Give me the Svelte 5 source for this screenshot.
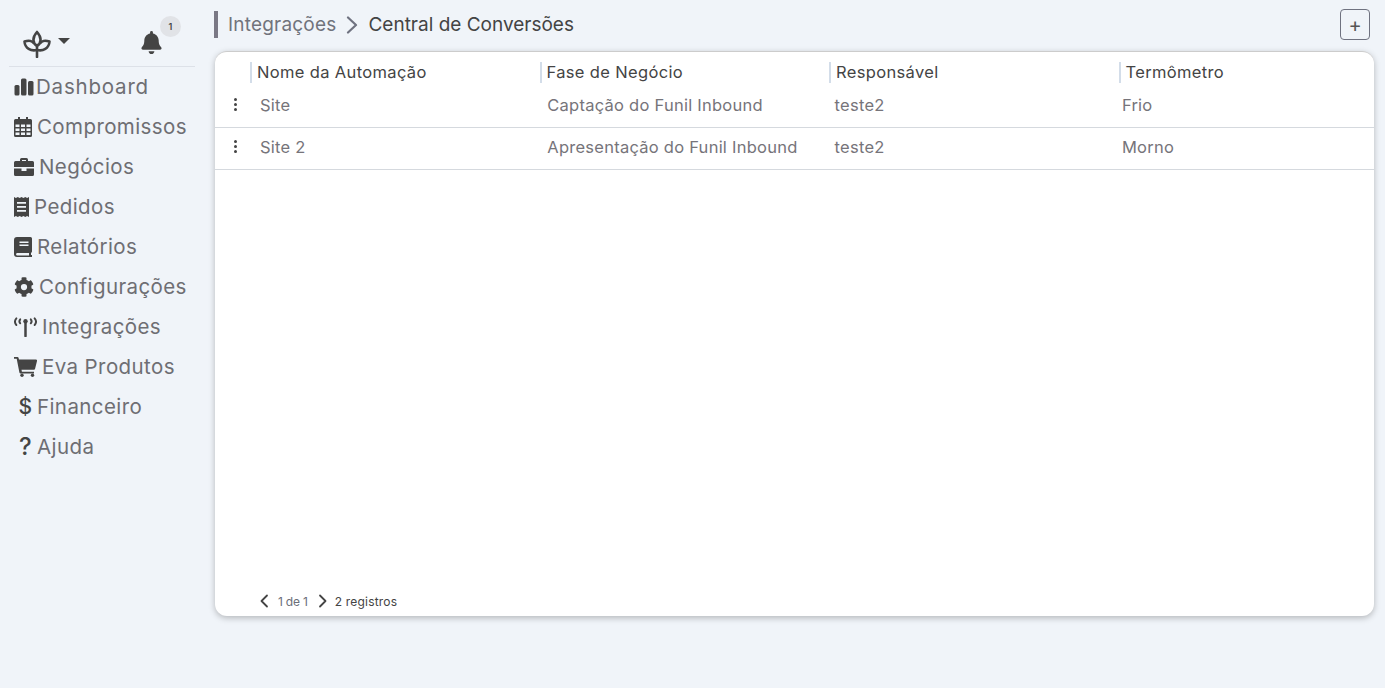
<script lang="ts">
	const menu = [
		{ label: 'Dashboard', icon: 'chart', w: 20, gap: 2 },
		{ label: 'Compromissos', icon: 'calendar', w: 18, gap: 5 },
		{ label: 'Negócios', icon: 'briefcase', w: 20, gap: 5 },
		{ label: 'Pedidos', icon: 'receipt', w: 15, gap: 5 },
		{ label: 'Relatórios', icon: 'book', w: 18, gap: 5 },
		{ label: 'Configurações', icon: 'cog', w: 20, gap: 5 },
		{ label: 'Integrações', icon: 'antenna', w: 23, gap: 5 },
		{ label: 'Eva Produtos', icon: 'cart', w: 23, gap: 5 },
		{ label: 'Financeiro', icon: 'dollar', w: 18, gap: 5 },
		{ label: 'Ajuda', icon: 'question', w: 18, gap: 5 }
	];

	const columns = ['Nome da Automação', 'Fase de Negócio', 'Responsável', 'Termômetro'];

	const rows = [
		['Site', 'Captação do Funil Inbound', 'teste2', 'Frio'],
		['Site 2', 'Apresentação do Funil Inbound', 'teste2', 'Morno']
	];
</script>

<div class="page">
	<aside class="sidebar">
		<div class="top">
			<div class="brand">
				<svg class="logo" viewBox="0 0 28 28" fill="none" stroke="#444" stroke-width="2.600" stroke-linecap="round" stroke-linejoin="round">
					<path d="M14 27V15" />
					<path d="M14 16C9.500 13 9 7.500 14 2C19 7.500 18.500 13 14 16Z" />
					<path d="M14 20C8 21.500 2 18.500 1.500 11.500C6 10 9.500 11 10.500 13" />
					<path d="M14 20C20 21.500 26 18.500 26.500 11.500C22 10 18.500 11 17.500 13" />
				</svg>
				<span class="caret"></span>
			</div>
			<div class="bell">
				<svg viewBox="0 0 448 512" fill="#444">
					<path d="M224 512c35 0 64-29 64-64H160c0 35 29 64 64 64zm215-150c-19-21-55-52-55-154 0-78-54-140-128-155V32a32 32 0 1 0-64 0v21C118 68 64 130 64 208c0 102-36 133-55 154-6 6-9 14-9 22 0 16 13 32 32 32h384c19 0 32-16 32-32 0-8-3-16-9-22z" />
				</svg>
				<span class="badge">1</span>
			</div>
		</div>

		<nav class="menu">
			{#each menu as item}
				<div class="menu-item" style="gap: {item.gap}px">
					<span class="icon" style="width: {item.w}px">
						{#if item.icon === 'chart'}
							<svg viewBox="0 0 20 20" fill="#444"><rect x="0.500" y="8" width="5" height="10.500" rx="1.500" /><rect x="7" y="1.500" width="5.500" height="17" rx="1.500" /><rect x="14" y="4" width="5.500" height="14.500" rx="1.500" /></svg>
						{:else if item.icon === 'calendar'}
							<svg viewBox="0 0 18 20" fill="#444"><path fill-rule="evenodd" d="M4 0h2v2h6V0h2v2h2.500A1.500 1.500 0 0 1 18 3.500v15a1.500 1.500 0 0 1-1.500 1.500h-15A1.500 1.500 0 0 1 0 18.500v-15A1.500 1.500 0 0 1 1.500 2H4zM1.500 7.500v2.500h4V7.500zm5.500 0v2.500h4V7.500zm5.500 0v2.500h4V7.500zm-11 4v2.500h4v-2.500zm5.500 0v2.500h4v-2.500zm5.500 0v2.500h4v-2.500zm-11 4V18h4v-2.500zm5.500 0V18h4v-2.500zm5.500 0V18h4v-2.500z" /></svg>
						{:else if item.icon === 'briefcase'}
							<svg viewBox="0 0 20 18" fill="#444"><path fill-rule="evenodd" d="M6 3V1.500A1.500 1.500 0 0 1 7.500 0h5A1.500 1.500 0 0 1 14 1.500V3h4.500A1.500 1.500 0 0 1 20 4.500V9H0V4.500A1.500 1.500 0 0 1 1.500 3zm2-1v1h4V2z" /><path d="M0 10.500h7.500V13h5v-2.500H20v6a1.500 1.500 0 0 1-1.500 1.500h-17A1.500 1.500 0 0 1 0 16.500z" /></svg>
						{:else if item.icon === 'receipt'}
							<svg viewBox="0 0 15 20" fill="#444"><path fill-rule="evenodd" d="M0 0l1.900 1L3.800 0l1.900 1L7.500 0l1.900 1 1.900-1 1.800 1L15 0v20l-1.900-1-1.800 1-1.900-1-1.900 1-1.800-1-1.900 1-1.900-1L0 20zM3 5v1.800h9V5zm0 4v1.800h9V9zm0 4v1.800h9V13z" /></svg>
						{:else if item.icon === 'book'}
							<svg viewBox="0 0 18 20" fill="#444"><path fill-rule="evenodd" d="M3 0h13.500A1.500 1.500 0 0 1 18 1.500v13a1.500 1.500 0 0 1-1 1.400v2.100h.5a1 1 0 0 1 0 2H3a3 3 0 0 1-3-3V3a3 3 0 0 1 3-3zm2.500 4.500v1.500h9V4.500zm0 3v1.500h9V7.500zM3 16a1.300 1.300 0 0 0 0 2.500h12V16z" /></svg>
						{:else if item.icon === 'cog'}
							<svg viewBox="0 0 512 512" fill="#444"><path d="M487 316l-42-25a190 190 0 0 0 0-70l42-25c5-3 7-8 6-14-11-35-30-67-55-94-4-4-10-5-15-2l-42 25a188 188 0 0 0-61-35V27c0-6-4-11-9-12-37-8-74-8-109 0-5 1-9 6-9 12v49a194 194 0 0 0-61 35L90 86c-5-3-11-2-15 2-25 27-44 59-55 94-2 6 1 11 6 14l42 25a190 190 0 0 0 0 70l-42 25c-5 3-7 8-6 14 11 35 30 67 55 94 4 4 10 5 15 2l42-25a188 188 0 0 0 61 35v49c0 6 4 11 9 12 37 8 74 8 109 0 5-1 9-6 9-12v-49a194 194 0 0 0 61-35l42 25c5 3 11 2 15-2 25-27 44-59 55-94 2-6-1-11-6-14zM256 336a80 80 0 1 1 0-160 80 80 0 0 1 0 160z" /></svg>
						{:else if item.icon === 'antenna'}
							<svg viewBox="0 0 24 20" fill="none" stroke="#444" stroke-width="2" stroke-linecap="round"><path d="M2.500 1C.800 3 .800 6 2.500 8" /><path d="M6.500 2C5.500 3.200 5.500 5 6.500 6.200" /><path d="M17.500 2C18.500 3.200 18.500 5 17.500 6.200" /><path d="M21.500 1C23.200 3 23.200 6 21.500 8" /><path d="M12 5V19.500" stroke-width="2.600" /><circle cx="12" cy="4" r="2.300" fill="#444" stroke="none" /></svg>
						{:else if item.icon === 'cart'}
							<svg viewBox="0 0 23 20" fill="#444"><path d="M0 0h3.500c.6 0 1 .4 1.100.9L5 2.500h17c.7 0 1.200.7 1 1.400l-2 8c-.1.500-.6.800-1 .8H7.500l.4 2H20v1.800H6.500c-.5 0-1-.4-1.100-.9L2.700 1.800H0z" /><circle cx="8" cy="18.300" r="1.700" /><circle cx="18.500" cy="18.300" r="1.700" /></svg>
						{:else if item.icon === 'dollar'}
							<span class="glyph dollar">$</span>
						{:else}
							<span class="glyph">?</span>
						{/if}
					</span>
					<span class="label">{item.label}</span>
				</div>
			{/each}
		</nav>
	</aside>

	<main class="content">
		<header class="breadcrumb">
			<div class="trail">
				<span class="parent">Integrações</span>
				<svg class="chevron" viewBox="0 0 12 18" fill="none" stroke="#6f7280" stroke-width="2.200" stroke-linecap="round" stroke-linejoin="round"><path d="M2 1.500L10 9L2 16.500" /></svg>
				<span class="current">Central de Conversões</span>
			</div>
			<button class="add" type="button">+</button>
		</header>

		<section class="card">
			<div class="head">
				{#each columns as col}
					<div class="head-cell">{col}</div>
				{/each}
			</div>

			<div class="body">
				{#each rows as row}
					<div class="row">
						<span class="dots"><i></i><i></i><i></i></span>
						{#each row as cell}
							<span class="cell">{cell}</span>
						{/each}
					</div>
				{/each}
			</div>

			<footer class="pager">
				<svg viewBox="0 0 10 14" fill="none" stroke="#444" stroke-width="1.800" stroke-linecap="round" stroke-linejoin="round"><path d="M8 1.500L2.500 7L8 12.500" /></svg>
				<span class="pages">1 de 1</span>
				<svg viewBox="0 0 10 14" fill="none" stroke="#444" stroke-width="1.800" stroke-linecap="round" stroke-linejoin="round"><path d="M2 1.500L7.500 7L2 12.500" /></svg>
				<span class="total">2 registros</span>
			</footer>
		</section>
	</main>
</div>

<style>
	:global(body) {
		margin: 0;
		background: #f0f4f9;
		font-family: 'Inter', 'Noto Sans', sans-serif;
	}

	.page {
		display: flex;
		height: 688px;
		overflow: hidden;
	}

	.sidebar {
		flex: 0 0 214px;
		box-sizing: border-box;
		padding: 0 19px 0 9px;
	}

	.top {
		display: flex;
		justify-content: space-between;
		height: 67px;
		box-sizing: border-box;
		border-bottom: 1px solid #dde1e8;
	}

	.brand {
		display: flex;
		align-items: center;
		gap: 7px;
		margin: 30px 0 0 14px;
		height: 28px;
	}

	.logo {
		width: 28px;
		height: 28px;
	}

	.caret {
		width: 0;
		height: 0;
		border-left: 6px solid transparent;
		border-right: 6px solid transparent;
		border-top: 6px solid #444;
		margin-top: -6px;
	}

	.bell {
		position: relative;
		margin: 31px 33px 0 0;
		width: 21px;
		height: 23px;
	}

	.bell svg {
		display: block;
		width: 21px;
		height: 23px;
	}

	.badge {
		position: absolute;
		left: 19px;
		top: -15px;
		width: 21px;
		height: 21px;
		border-radius: 50%;
		background: #e1e3e7;
		color: #444;
		font-size: 9px;
		font-weight: 600;
		display: flex;
		align-items: center;
		justify-content: center;
	}

	.menu {
		padding-left: 5px;
	}

	.menu-item {
		display: flex;
		align-items: center;
		height: 40px;
		font-size: 20.500px;
		color: #6e6e73;
		white-space: nowrap;
		letter-spacing: 0.4px;
	}

	.menu-item:first-child {
		letter-spacing: 0.8px;
	}

	.label {
		margin-top: -2px;
	}

	.icon {
		display: flex;
		align-items: center;
		justify-content: center;
		flex: none;
		height: 20px;
	}

	.icon svg {
		display: block;
		width: 100%;
		height: 100%;
	}

	.glyph {
		font-size: 24px;
		font-weight: 500;
		color: #444;
		padding-left: 5px;
		line-height: 20px;
	}

	.glyph.dollar {
		font-size: 21px;
		font-weight: 500;
	}

	.content {
		flex: 1;
		min-width: 0;
		padding-right: 11px;
	}

	.breadcrumb {
		display: flex;
		justify-content: space-between;
		height: 51px;
		box-sizing: border-box;
		padding-top: 9px;
	}

	.trail {
		display: flex;
		align-items: center;
		border-left: 4px solid #7a7885;
		padding-left: 10px;
		font-size: 19px;
		margin-top: 2px;
		height: 27px;
	}

	.parent {
		color: #70737c;
		letter-spacing: 0.2px;
	}

	.chevron {
		width: 12px;
		height: 18px;
		margin: 0 10px;
	}

	.current {
		color: #444;
	}

	.add {
		width: 30px;
		height: 31px;
		box-sizing: border-box;
		margin-right: 4px;
		border: 1px solid #6f7280;
		border-radius: 4px;
		background: transparent;
		color: #555;
		font-family: inherit;
		font-size: 20px;
		line-height: 1;
		padding: 0;
	}

	.card {
		margin-left: 1px;
		height: 565px;
		box-sizing: border-box;
		display: flex;
		flex-direction: column;
		background: #fff;
		border-radius: 12px;
		border-top: 1px solid #ccc;
		box-shadow: 0 2px 6px rgba(0, 0, 0, 0.25);
	}

	.head {
		display: grid;
		grid-template-columns: 289.500px 289.500px 289.500px 1fr;
		padding: 10px 0 0 35px;
	}

	.head-cell {
		border-left: 2px solid #d3dde9;
		height: 21px;
		line-height: 21px;
		padding-left: 5px;
		font-size: 16.500px;
		letter-spacing: 0.35px;
		color: #444;
	}

	.body {
		flex: 1;
	}

	.row {
		display: grid;
		grid-template-columns: 45px 287.300px 287.300px 287.300px 1fr;
		align-items: center;
		height: 42px;
		padding-bottom: 4px;
		border-bottom: 1px solid #d5d9de;
		box-sizing: border-box;
		font-size: 16.500px;
		letter-spacing: 0.25px;
		color: #76747a;
	}

	.row:first-child {
		height: 45px;
		padding-bottom: 1px;
	}

	.dots {
		display: flex;
		flex-direction: column;
		align-items: center;
		gap: 2px;
		width: 40px;
	}

	.dots i {
		width: 3px;
		height: 3px;
		border-radius: 50%;
		background: #444;
	}

	.pager {
		display: flex;
		align-items: center;
		height: 29px;
		padding: 0 0 1px 44px;
		font-size: 12px;
		color: #555;
		box-sizing: border-box;
	}

	.pager svg {
		width: 10px;
		height: 14px;
	}

	.pages {
		margin: 0 10px 0 9px;
		color: #6b6e78;
		letter-spacing: -0.2px;
	}

	.total {
		margin-left: 7px;
		color: #444;
		letter-spacing: 0.2px;
	}
</style>
